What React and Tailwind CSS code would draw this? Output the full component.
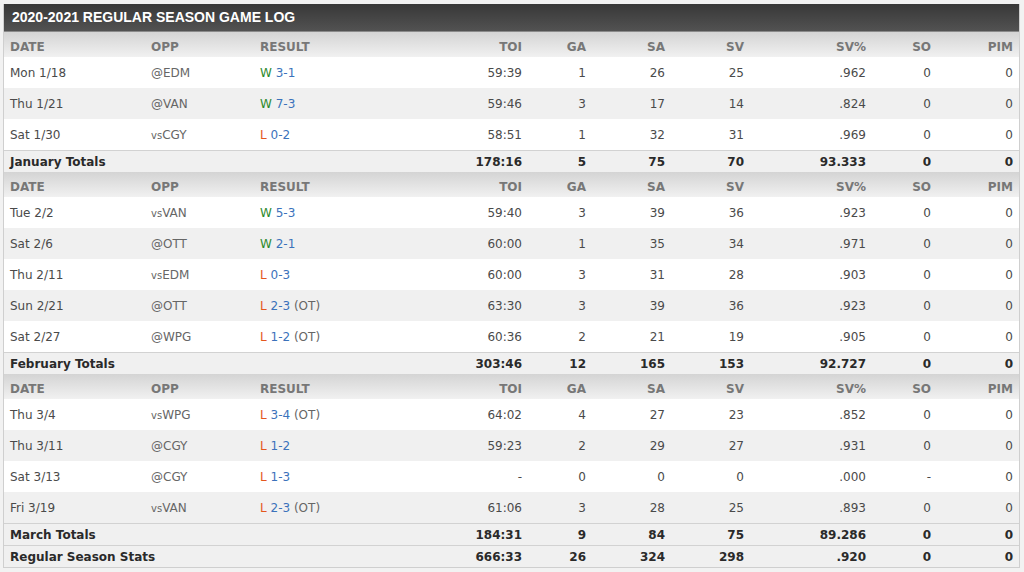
import React from 'react';

const cols = 'grid grid-cols-[141px_109px_166px_108px_64px_79px_79px_122px_65px_82px]';

const months = [
  {
    total: ['January Totals', '178:16', '5', '75', '70', '93.333', '0', '0'],
    games: [
      ['Mon 1/18', '@', 'EDM', 'W', '3-1', false, '59:39', '1', '26', '25', '.962', '0', '0'],
      ['Thu 1/21', '@', 'VAN', 'W', '7-3', false, '59:46', '3', '17', '14', '.824', '0', '0'],
      ['Sat 1/30', 'vs', 'CGY', 'L', '0-2', false, '58:51', '1', '32', '31', '.969', '0', '0'],
    ],
  },
  {
    total: ['February Totals', '303:46', '12', '165', '153', '92.727', '0', '0'],
    games: [
      ['Tue 2/2', 'vs', 'VAN', 'W', '5-3', false, '59:40', '3', '39', '36', '.923', '0', '0'],
      ['Sat 2/6', '@', 'OTT', 'W', '2-1', false, '60:00', '1', '35', '34', '.971', '0', '0'],
      ['Thu 2/11', 'vs', 'EDM', 'L', '0-3', false, '60:00', '3', '31', '28', '.903', '0', '0'],
      ['Sun 2/21', '@', 'OTT', 'L', '2-3', true, '63:30', '3', '39', '36', '.923', '0', '0'],
      ['Sat 2/27', '@', 'WPG', 'L', '1-2', true, '60:36', '2', '21', '19', '.905', '0', '0'],
    ],
  },
  {
    total: ['March Totals', '184:31', '9', '84', '75', '89.286', '0', '0'],
    games: [
      ['Thu 3/4', 'vs', 'WPG', 'L', '3-4', true, '64:02', '4', '27', '23', '.852', '0', '0'],
      ['Thu 3/11', '@', 'CGY', 'L', '1-2', false, '59:23', '2', '29', '27', '.931', '0', '0'],
      ['Sat 3/13', '@', 'CGY', 'L', '1-3', false, '-', '0', '0', '0', '.000', '-', '0'],
      ['Fri 3/19', 'vs', 'VAN', 'L', '2-3', true, '61:06', '3', '28', '25', '.893', '0', '0'],
    ],
  },
];

function HeaderRow() {
  const right = ['TOI', 'GA', 'SA', 'SV', 'SV%', 'SO', 'PIM'];
  return (
    <div className={`${cols} h-[25px] items-center pt-[5px] bg-gradient-to-b from-[#d4d4d4] to-[#f1f1f1] text-[12px] font-bold text-[#777]`}>
      <div className="pl-[6px]">DATE</div>
      <div className="pl-[6px]">OPP</div>
      <div className="pl-[6px]">RESULT</div>
      {right.map((h) => (
        <div key={h} className="pr-[6px] text-right">{h}</div>
      ))}
    </div>
  );
}

function GameRow({ g, shaded }) {
  const [date, pre, opp, wl, score, ot, ...stats] = g;
  return (
    <div className={`${cols} h-[31px] items-center text-[12px] text-[#4a4a4a] ${shaded ? 'bg-[#f0f0f0]' : 'bg-white'}`}>
      <div className="pl-[6px]">{date}</div>
      <div className="pl-[6px] text-[#666]">
        {pre === 'vs' ? <span className="text-[10px]">vs</span> : '@'}
        {opp}
      </div>
      <div className="pl-[6px]">
        <span className={wl === 'W' ? 'text-[#2e8a2e]' : 'text-[#e4571e]'}>{wl}</span>{' '}
        <span className="text-[#3b72bb]">{score}</span>
        {ot && <span className="text-[#666]"> (OT)</span>}
      </div>
      {stats.map((s, i) => (
        <div key={i} className="pr-[6px] text-right">{s}</div>
      ))}
    </div>
  );
}

function TotalRow({ t, last }) {
  const [label, ...vals] = t;
  return (
    <div className={`${cols} h-[22px] items-center border-t border-[#d2d2d2] bg-[#f0f0f0] text-[12px] font-bold text-[#2a2a2a] ${last ? 'border-b' : ''}`}>
      <div className="col-span-3 pl-[6px]">{label}</div>
      {vals.map((v, i) => (
        <div key={i} className="pr-[6px] text-right">{v}</div>
      ))}
    </div>
  );
}

export default function App() {
  return (
    <div className="min-h-[572px] w-[1024px] bg-[#f2f2f2] pt-[4px] pl-[3px] font-['DejaVu_Sans',Verdana,sans-serif]">
      <div className="w-[1017px] border-x border-b border-[#cfcfcf] bg-white">
        <div className="flex h-[28px] items-center border-b border-[#8a8a8a] bg-gradient-to-b from-[#383838] to-[#525252] pl-[8px] font-['Liberation_Sans',Arial,sans-serif] text-[14px] font-bold text-white">
          2020-2021 REGULAR SEASON GAME LOG
        </div>
        {months.map((m, mi) => (
          <div key={mi}>
            <HeaderRow />
            {m.games.map((g, gi) => (
              <GameRow key={gi} g={g} shaded={gi % 2 === 1} />
            ))}
            <TotalRow t={m.total} />
          </div>
        ))}
        <TotalRow t={['Regular Season Stats', '666:33', '26', '324', '298', '.920', '0', '0']} />
      </div>
    </div>
  );
}
